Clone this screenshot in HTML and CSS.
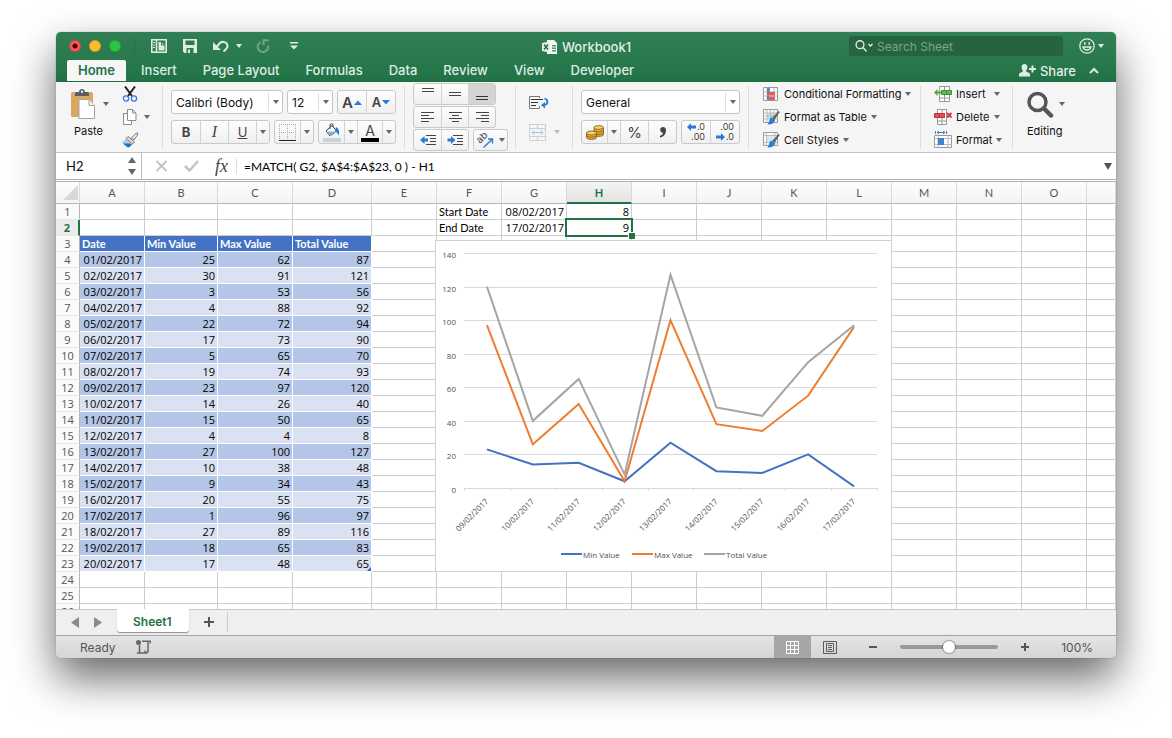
FILE: index.html
```
<!DOCTYPE html>
<html lang="en">
<head>
    <meta charset="UTF-8">
    <meta name="viewport" content="width=device-width, initial-scale=1.0">
    <title>Workbook1</title>
    <link rel="stylesheet" href="styles.css">
</head>
<body>
    <div class="window">
        <header class="top">
            <div class="titlebar">
                <div class="title-left">
                    <button class="light red" aria-label="Close"></button>
                    <button class="light yellow" aria-label="Minimize"></button>
                    <button class="light green" aria-label="Full screen"></button>
                    <span class="title-sep"></span>
                    <button class="plain tool" aria-label="Gallery">
                        <svg width="16" height="14" viewBox="0 0 16 14" fill="none" stroke="#dfece4" stroke-width="1.6"><path d="M.8.8h14.4v12.4H.8zM5.5.8v12.4"/><path d="M2 3.5h2M2 6h2M2 8.500h2" stroke-width="1"/><path d="M7.500 3v8.500h6V6L10.500 3z" fill="#dfece4" stroke="none"/><path d="M10.500 2.500V6H14" stroke="#2b7b4e" stroke-width="1"/></svg>
                    </button>
                    <button class="plain tool" aria-label="Save">
                        <svg width="14" height="14" viewBox="0 0 14 14"><path d="M0 0h14v14H1.500L0 12.500z" fill="#dfece4"/><path d="M2.500 1.500h9v4.500h-9zM3.500 9h7v5h-7z" fill="#2b7b4e"/><path d="M5 10.500h2V14H5z" fill="#dfece4"/></svg>
                    </button>
                    <button class="plain tool undo" aria-label="Undo">
                        <svg width="16" height="14" viewBox="0 0 16 14" fill="none" stroke="#dfece4" stroke-width="2"><path d="M3 8.500 6.500 4.500C9 1.500 14.500 3 14.500 7c0 2-1.500 3.500-4 5.500"/><path d="M0 3v8h8z" fill="#dfece4" stroke="none"/></svg>
                        <span class="caret light-caret"></span>
                    </button>
                    <button class="plain tool" aria-label="Redo">
                        <svg width="14" height="14" viewBox="0 0 14 14" fill="none" stroke="#6fa486" stroke-width="2"><path d="M4.500 3.200A5.200 5.200 0 1 0 12 6.500"/><path d="M7.500 6V1.200H12.500" /></svg>
                    </button>
                    <button class="plain tool customize" aria-label="Customize toolbar">
                        <svg width="8" height="8" viewBox="0 0 8 8" fill="#dfece4"><path d="M0 0h8v1.500H0zM0 3.500h8L4 7.500z"/></svg>
                    </button>
                </div>
                <h1 class="title">
                    <svg width="15" height="14" viewBox="0 0 15 14"><path d="M5 0h7l3 3v11H5z" fill="#f4f4f4"/><path d="M10 5h4v1.500h-4zM10 7.500h4V9h-4zM10 10h4v1.500h-4z" fill="#4d9a6c"/><path d="M0 3l8-1.500v11L0 11z" fill="#e7f1eb"/><path d="M2 4.500l4 5M6 4.500l-4 5" stroke="#217346" stroke-width="1.500"/></svg>
                    Workbook1
                </h1>
                <div class="title-right">
                    <label class="search">
                        <svg width="19" height="12" viewBox="0 0 19 12" fill="none" stroke="#dfece4" stroke-width="1.400"><circle cx="5" cy="4.700" r="3.900"/><path d="M8 7.500l3.500 4M13.500 4l2 2 2-2"/></svg>
                        <input type="text" placeholder="Search Sheet" aria-label="Search Sheet">
                    </label>
                    <button class="plain smile" aria-label="Feedback">
                        <svg width="16" height="16" viewBox="0 0 16 16" fill="none" stroke="#dfece4" stroke-width="1.300"><circle cx="8" cy="8" r="7.200"/><path d="M4 9c1 4 7 4 8 0z"/><path d="M5.800 4.300v2.400M10.200 4.300v2.400" stroke-width="1.600"/></svg>
                        <span class="caret light-caret"></span>
                    </button>
                </div>
            </div>
            <nav class="tabs">
                <a href="#" class="tab active">Home</a>
                <a href="#" class="tab">Insert</a>
                <a href="#" class="tab">Page Layout</a>
                <a href="#" class="tab">Formulas</a>
                <a href="#" class="tab">Data</a>
                <a href="#" class="tab">Review</a>
                <a href="#" class="tab">View</a>
                <a href="#" class="tab">Developer</a>
                <button class="plain share">
                    <svg width="17" height="13" viewBox="0 0 17 13" fill="#dfece4"><path d="M5.500 0C7.500 0 8.500 1.400 8.400 3.400 8.300 5 7.500 6 7.200 6.500v1L11 9.500V12.500H0v-3l3.800-2v-1C3.500 6 2.700 5 2.600 3.400 2.500 1.400 3.500 0 5.500 0z"/><path d="M12.500 1.500h2v2.500H17v2h-2.500v2.500h-2V6H10V4h2.500z"/></svg>
                    Share
                </button>
                <button class="plain collapse" aria-label="Collapse ribbon">
                    <svg width="10" height="7" viewBox="0 0 10 7" fill="none" stroke="#dfece4" stroke-width="2"><path d="M1 6l4-4 4 4"/></svg>
                </button>
            </nav>
        </header>

        <section class="ribbon">
            <div class="group clipboard">
                <button class="plain big paste">
                    <span class="big-icon">
                        <svg width="24" height="30" viewBox="0 0 24 30"><rect x="0" y="3" width="22" height="25" rx="1.500" fill="#dba85f"/><path d="M4 7V4.500Q4 3 6 3h2c0-4 6-4 6 0h2q2 0 2 1.500V7z" fill="#5a5d63"/><circle cx="11" cy="2.800" r="1.200" fill="#e8e8e8"/><path d="M8 10.500h10l5.500 6v13H8z" fill="#fff" stroke="#a5a5a5"/><path d="M18 10.500v6h5.500" fill="#f0f0f0" stroke="#a5a5a5"/></svg>
                        <span class="caret"></span>
                    </span>
                    <span class="big-label">Paste</span>
                </button>
                <div class="stack">
                    <button class="plain" aria-label="Cut">
                        <svg width="16" height="16" viewBox="0 0 16 16" fill="none"><path d="M3 .5l7 9.500M13 .5L6 10" stroke="#222" stroke-width="2"/><circle cx="4" cy="12.500" r="2.600" stroke="#2f7fd0" stroke-width="1.300"/><circle cx="12" cy="12.500" r="2.600" stroke="#2f7fd0" stroke-width="1.300"/></svg>
                    </button>
                    <button class="plain" aria-label="Copy">
                        <svg width="16" height="16" viewBox="0 0 16 16" fill="#fff" stroke="#8d8d8d"><path d="M1.500 4.500h8v11h-8z"/><path d="M5.500.5h5l3.500 3.500v7.500H5.500z"/><path d="M10.500.5V4H14" fill="none"/></svg>
                        <span class="caret"></span>
                    </button>
                    <button class="plain" aria-label="Format painter">
                        <svg width="17" height="16" viewBox="0 0 17 16"><path d="M9.500 6L14 1.200q1.500-.8 2 .8L12 8z" fill="#ededed" stroke="#777"/><path d="M6 4.500l6.500 5.500-2 2L4 6.500z" fill="#ddd" stroke="#777"/><path d="M3.800 7L10 12c-1.500 2.500-3 3.500-4.500 3.500L.5 11.500C0 9.500 2 9 3.800 7z" fill="#a8c9ee"/><path d="M1 11.500l5 4c2-.5 3-1.500 4-3.500l-3-.5z" fill="#2470bd"/></svg>
                    </button>
                </div>
            </div>
            <span class="divider"></span>

            <div class="group rows font-group">
                <div class="line">
                    <span class="combo combo-font"><select aria-label="Font"><option>Calibri (Body)</option></select><i><span class="caret"></span></i></span>
                    <span class="combo combo-size"><select aria-label="Font size"><option>12</option></select><i><span class="caret"></span></i></span>
                    <span class="seg wide">
                        <button aria-label="Increase font size"><b class="letter">A</b><svg width="8" height="5" viewBox="0 0 8 5"><path d="M0 5l4-4.500L8 5z" fill="#2b7cd3"/></svg></button>
                        <button aria-label="Decrease font size"><b class="letter small">A</b><svg width="8" height="5" viewBox="0 0 8 5"><path d="M0 0h8L4 4.500z" fill="#2b7cd3"/></svg></button>
                    </span>
                </div>
                <div class="line">
                    <span class="seg">
                        <button class="w28"><b>B</b></button>
                        <button class="w28 italic"><i>I</i></button>
                        <button class="w28"><u>U</u></button>
                        <button class="more" aria-label="Underline styles"><span class="caret"></span></button>
                    </span>
                    <span class="seg">
                        <button class="w25" aria-label="Borders"><svg width="17" height="17" viewBox="0 0 17 17" fill="none"><path d="M.5 0v16M8.500 0v16M16.500 0v16M0 .5h17M0 8.500h17" stroke="#aaa" stroke-dasharray="1 1"/><path d="M0 16.500h17" stroke="#222"/></svg></button>
                        <button class="more" aria-label="Border styles"><span class="caret"></span></button>
                    </span>
                    <span class="seg">
                        <button class="w25" aria-label="Fill color"><svg width="18" height="19" viewBox="0 0 18 19"><path d="M3 8l6-5.500 4.500 5.500-6.500 5z" fill="#fff" stroke="#444"/><path d="M3.500 8.500h9.500l-6 4.500z" fill="#7fb3e8"/><path d="M7 6V1.500Q8.500 0 10 1.500V4" fill="none" stroke="#444"/><path d="M13 4c3 1.500 4 5 2.500 8.500C14.500 10 13.500 9 12 8z" fill="#2b7cd3"/><path d="M0 15h18v4H0z" fill="#c9d3de"/></svg></button>
                        <button class="more" aria-label="Fill colors"><span class="caret"></span></button>
                        <button class="w25 color-a" aria-label="Font color"><span>A</span></button>
                        <button class="more" aria-label="Font colors"><span class="caret"></span></button>
                    </span>
                </div>
            </div>
            <span class="divider"></span>

            <div class="group align-group">
                <span class="seg short">
                    <button class="w27" aria-label="Align top"><svg width="12" height="16" viewBox="0 0 12 16" stroke="#444"><path d="M0 2.500h12M0 5.500h12"/></svg></button>
                    <button class="w27" aria-label="Align middle"><svg width="12" height="16" viewBox="0 0 12 16" stroke="#444"><path d="M0 6.500h12M0 9.500h12"/></svg></button>
                    <button class="w27 pressed" aria-label="Align bottom"><svg width="12" height="16" viewBox="0 0 12 16" stroke="#333"><path d="M0 10.500h12M0 13.500h12"/></svg></button>
                </span>
                <span class="seg short">
                    <button class="w27" aria-label="Align left"><svg width="13" height="10" viewBox="0 0 13 10" stroke="#444"><path d="M0 .5h13M0 3.500h8M0 6.500h13M0 9.500h8"/></svg></button>
                    <button class="w27" aria-label="Center"><svg width="13" height="10" viewBox="0 0 13 10" stroke="#444"><path d="M0 .5h13M3 3.500h7M0 6.500h13M3 9.500h7"/></svg></button>
                    <button class="w27" aria-label="Align right"><svg width="13" height="10" viewBox="0 0 13 10" stroke="#444"><path d="M0 .5h13M5 3.500h8M0 6.500h13M5 9.500h8"/></svg></button>
                </span>
                <div class="line">
                    <span class="seg short">
                        <button class="w27" aria-label="Decrease indent"><svg width="16" height="10" viewBox="0 0 16 10"><path d="M6 .5h10M10 3.500h6M10 6.500h6M6 9.500h10" stroke="#444"/><path d="M0 5l4.500-4v2.500H8v3H4.500V9z" fill="#2b7cd3"/></svg></button>
                        <button class="w27" aria-label="Increase indent"><svg width="16" height="10" viewBox="0 0 16 10"><path d="M6 .5h10M10 3.500h6M10 6.500h6M6 9.500h10" stroke="#444"/><path d="M8.500 5L4 1v2.500H.5v3H4V9z" fill="#2b7cd3"/></svg></button>
                    </span>
                    <span class="seg short">
                        <button class="orient" aria-label="Orientation"><svg width="18" height="18" viewBox="0 0 18 18"><text x="3" y="13" class="ab" transform="rotate(-45 3 13)">ab</text><path d="M6.500 16.500L15 8.500M11 8H15.500V12.500" fill="none" stroke="#2b7cd3" stroke-width="1.400"/></svg><span class="caret"></span></button>
                    </span>
                </div>
            </div>
            <span class="divider"></span>

            <div class="group rows wrap-group">
                <button class="plain" aria-label="Wrap text">
                    <svg width="20" height="13" viewBox="0 0 20 13" fill="none"><path d="M10.500 2V.5H.5v12h10V10" stroke="#777"/><path d="M2 3.500h12M2 9.500h5M2 6.500h7" stroke="#333"/><path d="M15.500 2.500c4 1 4 6-.5 6.500" stroke="#2b7cd3" stroke-width="1.800"/><path d="M12 9l4-3v6.500z" fill="#2b7cd3"/></svg>
                </button>
                <button class="plain" aria-label="Merge cells">
                    <svg width="17" height="17" viewBox="0 0 17 17" fill="none" stroke="#cfcfcf"><path d="M.5.5h16v16H.5zM.5 4.500h16M.5 12.500h16M8.500.5v4M8.500 12.500v4"/><path d="M3 8.500h11M5.500 6L3 8.500 5.500 11M11.500 6L14 8.500 11.500 11" stroke="#9fc3e8"/></svg>
                    <span class="caret dim"></span>
                </button>
            </div>
            <span class="divider"></span>

            <div class="group rows number-group">
                <span class="combo"><select aria-label="Number format"><option>General</option></select><i><span class="caret"></span></i></span>
                <div class="line">
                    <span class="seg">
                        <button class="w25" aria-label="Currency"><svg width="18" height="15" viewBox="0 0 18 15" stroke="#7b5316" stroke-width=".8" fill="#e5ae38"><path d="M8 2.500v7c0 2.500 9.500 2.500 9.500 0v-7z"/><path d="M8 5c0 2.500 9.500 2.500 9.500 0M8 7.500c0 2.500 9.500 2.500 9.500 0" fill="none"/><ellipse cx="12.700" cy="2.500" rx="4.700" ry="1.900" fill="#f7d271"/><path d="M.5 8v4.500c0 2.500 10 2.500 10 0V8z"/><path d="M.5 10.300c0 2.500 10 2.500 10 0" fill="none"/><ellipse cx="5.500" cy="8" rx="5" ry="2" fill="#f7d271"/></svg></button>
                        <button class="more" aria-label="Currency formats"><span class="caret"></span></button>
                        <button class="w28 percent">%</button>
                        <button class="w28" aria-label="Comma style"><svg width="8" height="12" viewBox="0 0 8 12"><path d="M1.200 3.500C1.200 0 7.300 0 7 4.500 6.800 8.500 4.500 11 1 11.500V9.800c2-.4 3-1.800 3-3C2.500 7 1.200 5.500 1.200 3.500z" fill="#444"/></svg></button>
                    </span>
                    <span class="seg wide">
                        <button class="decimals" aria-label="Increase decimal"><span><svg width="9" height="8" viewBox="0 0 9 8"><path d="M0 4l4-4v2.500h5v3H4V8z" fill="#2b7cd3"/></svg>.0</span><span>.00</span></button>
                        <button class="decimals" aria-label="Decrease decimal"><span>.00</span><span><svg width="9" height="8" viewBox="0 0 9 8"><path d="M9 4L5 0v2.500H0v3h5V8z" fill="#2b7cd3"/></svg>.0</span></button>
                    </span>
                </div>
            </div>
            <span class="divider"></span>

            <div class="group stack styles-group">
                <button class="plain">
                    <svg width="17" height="14" viewBox="0 0 17 14"><path d="M.5.5h14v13H.5z" fill="#fff" stroke="#999"/><path d="M.5 5h14M.5 9h14M4 .5v13M11 .5v13" stroke="#bbb"/><path d="M4 1h3v4H4z" fill="#4a90d9"/><path d="M4 5h8v3.500H4z" fill="#e25a5a"/><path d="M4 8.500h2V13H4z" fill="#4a90d9"/><path d="M6 9.500h6V13H6z" fill="#e25a5a"/></svg>
                    Conditional Formatting<span class="caret"></span>
                </button>
                <button class="plain">
                    <svg width="17" height="16" viewBox="0 0 17 16"><path d="M.5.5h14v13H.5z" fill="#fff" stroke="#999"/><path d="M4 4h7v6H4z" fill="#c5dcf4"/><path d="M.5 4h14M.5 7h14M.5 10h14M4 .5v13M7.500.5v13M11 .5v13" stroke="#bbb"/><path d="M9 9l6-6.500q1.500-.8 1.500.8L11.500 11z" fill="#666"/><path d="M8.500 8.500l3.500 3c-1 3-4 4.500-7.500 4 1.500-1 1-5 4-7z" fill="#2b7cd3"/></svg>
                    Format as Table<span class="caret"></span>
                </button>
                <button class="plain">
                    <svg width="17" height="16" viewBox="0 0 17 16"><path d="M.5.5h14v13H.5z" fill="#fff" stroke="#999"/><path d="M4 4h7v6H4z" fill="#d5e6f7"/><path d="M.5 3.500h14M.5 10.500h14M3.500.5v13M12 .5v13" stroke="#bbb"/><path d="M9 9l6-6.500q1.500-.8 1.500.8L11.500 11z" fill="#666"/><path d="M8.500 8.500l3.500 3c-1 3-4 4.500-7.500 4 1.500-1 1-5 4-7z" fill="#2b7cd3"/></svg>
                    Cell Styles<span class="caret"></span>
                </button>
            </div>
            <span class="divider"></span>

            <div class="group stack cells-group">
                <button class="plain">
                    <svg width="18" height="16" viewBox="0 0 18 16"><path d="M5.500.5h10v15h-10zM10.500.5v15M5.500 12h10" fill="#fff" stroke="#999"/><path d="M7.500 4.500h10v4h-10zM12.500 4.500v4" fill="#5fb851" stroke="#3d9432"/><path d="M0 6.500L3.500 3v2.500H7v2H3.500V10z" fill="#4ea93f"/></svg>
                    <span class="wide-label">Insert</span><span class="caret"></span>
                </button>
                <button class="plain">
                    <svg width="18" height="16" viewBox="0 0 18 16"><path d="M3.500.5h9v15h-9zM8 .5v15M3.500 12h9" fill="#fff" stroke="#999"/><path d="M.5 4.500h10v4H.5zM5.500 4.500v4" fill="#e05252" stroke="#c13232"/><path d="M13 4l4.500 4.500M17.500 4L13 8.500" stroke="#d03535" stroke-width="1.800"/></svg>
                    <span class="wide-label">Delete</span><span class="caret"></span>
                </button>
                <button class="plain">
                    <svg width="18" height="17" viewBox="0 0 18 17"><path d="M.5 4.500h17v12H.5z" fill="#fff" stroke="#999"/><path d="M.5 7.500h17M.5 13.500h17M4 4.500v12M14 4.500v12" stroke="#bbb"/><path d="M4 7h6v7H4z" fill="#3f82c9"/><path d="M1.500 0v3M12.500 0v3M3 1.500h8M5 0L3 1.500 5 3M9 0l2 1.500L9 3" fill="none" stroke="#3f82c9"/></svg>
                    <span class="wide-label">Format</span><span class="caret"></span>
                </button>
            </div>
            <span class="divider"></span>

            <div class="group editing">
                <button class="plain big">
                    <span class="big-icon">
                        <svg width="27" height="30" viewBox="0 0 27 30" fill="none" stroke="#55565b"><circle cx="10.500" cy="13" r="8.500" stroke-width="3.500"/><path d="M17 19.500l7 7" stroke-width="4.500" stroke-linecap="round"/></svg>
                        <span class="caret"></span>
                    </span>
                    <span class="big-label">Editing</span>
                </button>
            </div>
        </section>

        <section class="formula-bar">
            <label class="name-box"><input type="text" value="H2" aria-label="Name box">
                <svg width="8" height="18" viewBox="0 0 8 18" fill="#666"><path d="M0 6l4-6 4 6zM0 12h8l-4 6z"/></svg>
            </label>
            <button class="plain" aria-label="Cancel"><svg width="13" height="12" viewBox="0 0 13 12" stroke="#c4c4c4" stroke-width="2"><path d="M1.500 1l10 10M11.500 1l-10 10"/></svg></button>
            <button class="plain" aria-label="Enter"><svg width="15" height="12" viewBox="0 0 15 12" fill="none" stroke="#c4c4c4" stroke-width="2.500"><path d="M1 6l4.500 4.500L14 1"/></svg></button>
            <button class="plain fx">fx</button>
            <input class="formula" type="text" value="=MATCH( G2, $A$4:$A$23, 0 ) - H1" aria-label="Formula">
            <button class="plain expand" aria-label="Expand formula bar"><svg width="8" height="7" viewBox="0 0 8 7"><path d="M0 0h8L4 7z" fill="#555"/></svg></button>
        </section>

        <main class="sheet">
            <table class="grid">
                <colgroup>
                    <col class="c-head"><col class="c-a"><col class="c-b"><col class="c-c"><col class="c-d">
                    <col class="c-n" span="11"><col>
                </colgroup>
                <thead><tr id="columns"></tr></thead>
                <tbody id="rows"></tbody>
            </table>
            <svg class="chart" id="chart" viewBox="0 0 455 330" role="img" aria-label="Line chart"></svg>
        </main>

        <nav class="sheet-tabs">
            <button class="plain" aria-label="Previous sheet"><svg width="8" height="11" viewBox="0 0 8 11"><path d="M8 0v11L0 5.500z" fill="#8a8a8a"/></svg></button>
            <button class="plain" aria-label="Next sheet"><svg width="8" height="11" viewBox="0 0 8 11"><path d="M0 0v11l8-5.500z" fill="#8a8a8a"/></svg></button>
            <a href="#" class="sheet-tab">Sheet1</a>
            <button class="plain add" aria-label="Add sheet"><svg width="10" height="10" viewBox="0 0 10 10"><path d="M4 0h2v4h4v2H6v4H4V6H0V4h4z" fill="#555"/></svg></button>
        </nav>

        <footer class="status">
            <span class="ready">Ready</span>
            <svg width="15" height="14" viewBox="0 0 15 14" fill="none" stroke="#666" stroke-width="1.500"><circle cx="2.500" cy="2.500" r="2.500" fill="#666" stroke="none"/><path d="M6 1.200h8.500v2.300M12 1v9.500q0 2.500-2 2.500H1M3.500 5v8M9 10.500q0 2.500 2 2.500"/></svg>
            <button class="plain view active" aria-label="Normal view"><svg width="13" height="13" viewBox="0 0 13 13" fill="none" stroke="#fff"><path d="M.5.5h12v12H.5zM4.500.5v12M8.500.5v12M.5 4.500h12M.5 8.500h12"/></svg></button>
            <button class="plain view" aria-label="Page layout view"><svg width="14" height="13" viewBox="0 0 14 13" fill="none" stroke="#5d5d5d"><path d="M.5.5h13v12H.5zM3.500 2.500h7v8h-7zM5 4.500h4M5 6.500h4M5 8.500h4"/></svg></button>
            <button class="plain zoom-out" aria-label="Zoom out"><svg width="8" height="8" viewBox="0 0 8 8"><path d="M0 3h8v2H0z" fill="#555"/></svg></button>
            <input type="range" class="zoom" min="0" max="100" value="50" aria-label="Zoom">
            <button class="plain zoom-in" aria-label="Zoom in"><svg width="8" height="8" viewBox="0 0 8 8"><path d="M3 0h2v3h3v2H5v3H3V5H0V3h3z" fill="#555"/></svg></button>
            <span class="percent-label">100%</span>
        </footer>
    </div>

    <script src="script.js"></script>
</body>
</html>
```
FILE: styles.css
```
* {
    box-sizing: border-box;
}

body {
    margin: 0;
    padding: 32px 56px 80px;
    background: white;
    font-family: Inter, "Liberation Sans", sans-serif;
    font-size: 11px;
    color: #111;
    overflow: hidden;
}

.window {
    display: flex;
    flex-direction: column;
    height: calc(100vh - 112px);
    min-height: 400px;
    border-radius: 5px;
    overflow: hidden;
    background: white;
    box-shadow: 0 0 1px rgba(0, 0, 0, 0.6), 0 20px 44px rgba(0, 0, 0, 0.6);
}

button, input, select {
    font: inherit;
    color: inherit;
}

button {
    padding: 0;
    white-space: nowrap;
}

svg {
    display: block;
    flex: none;
}

a {
    text-decoration: none;
}

.plain {
    display: flex;
    align-items: center;
    border: none;
    background: none;
}

.caret {
    flex: none;
    width: 0;
    border: 3px solid transparent;
    border-top: 4px solid #666;
    border-bottom: none;
}

.caret.dim {
    border-top-color: #bbb;
}

.caret.light-caret {
    border-top-color: #dfece4;
}

/* title bar */
.top {
    background: linear-gradient(#318055, #217346);
    color: #e3efe8;
    border-bottom: 1px solid #1c6a3f;
}

.titlebar {
    display: flex;
    align-items: center;
    height: 28px;
}

.title-left, .title-right {
    display: flex;
    align-items: center;
    flex: 1;
}

.title-left {
    padding-left: 13px;
    gap: 8px;
}

.light {
    width: 12px;
    height: 12px;
    border-radius: 50%;
    border: 1px solid rgba(0, 0, 0, 0.15);
}

.red {
    background: radial-gradient(#4d0000 2px, #fc5753 3px);
}

.yellow {
    background: #fdbc2e;
}

.green {
    background: #28c840;
}

.title-sep {
    width: 1px;
    height: 16px;
    margin: 0 8px 0 5px;
    background: #276e49;
}

.tool {
    margin-right: 8px;
}

.undo {
    gap: 7px;
}

.undo + .tool {
    margin-left: -2px;
}

.customize {
    margin-left: 4px;
}

.title {
    display: flex;
    align-items: center;
    gap: 5px;
    margin: 0;
    padding-top: 2px;
    font-size: 13px;
    font-weight: 500;
}

.title-right {
    justify-content: flex-end;
    padding-right: 12px;
    gap: 16px;
}

.search {
    display: flex;
    align-items: center;
    gap: 3px;
    width: 214px;
    height: 20px;
    padding-left: 6px;
    border-radius: 3px;
    background: #25643f;
}

.search input {
    flex: 1;
    min-width: 0;
    border: none;
    background: none;
    font-size: 12px;
    padding: 0;
}

.search input::placeholder {
    color: #79a58a;
}

.smile {
    gap: 3px;
}

.tabs {
    display: flex;
    height: 21px;
    padding-left: 11px;
    padding-right: 17px;
    font-size: 13px;
    font-weight: 500;
}

.tab {
    padding: 0 13px;
    line-height: 20px;
    color: #dfece4;
}

.tab.active {
    padding: 0 11px;
    margin-right: 2px;
    background: #f6f6f6;
    color: #217346;
    font-weight: 600;
    border-radius: 2px 2px 0 0;
}

.share {
    margin-left: auto;
    gap: 4px;
    line-height: 20px;
}

.collapse {
    margin-left: 13px;
}

/* ribbon */
.ribbon {
    display: flex;
    height: 71px;
    flex: none;
    background: #f5f5f5;
    border-bottom: 1px solid #c4c4c4;
}

.divider {
    width: 1px;
    margin: 4px 8px;
    background: #dcdcdc;
}

.group, .line, .seg {
    display: flex;
    flex: none;
}

.line {
    gap: 4px;
}

.rows {
    flex-direction: column;
    gap: 6px;
    padding-top: 8px;
}

.stack {
    display: grid;
    grid-template-rows: 23px 23px 23px;
    align-content: start;
}

.clipboard {
    width: 98px;
    padding-left: 15px;
    gap: 11px;
}

.clipboard .stack .plain {
    gap: 6px;
}

.big {
    flex-direction: column;
    align-items: flex-start;
    width: 40px;
    padding-top: 7px;
    gap: 5px;
}

.big-icon {
    display: flex;
    align-items: center;
    gap: 8px;
}

.editing .big-icon {
    gap: 5px;
}

.big-label {
    line-height: 14px;
}

.paste .big-label {
    padding-left: 3px;
}

.combo {
    display: flex;
    height: 24px;
    border: 1px solid #c3c3c3;
    border-radius: 3px;
    background: white;
}

.combo select {
    flex: 1;
    min-width: 0;
    appearance: none;
    border: none;
    background: none;
    padding: 0 4px;
    font-size: 12px;
}

.combo i {
    display: flex;
    align-items: center;
    justify-content: center;
    width: 14px;
    margin: 2px 0;
    border-left: 1px solid #ddd;
}

.combo-font {
    width: 112px;
}

.combo-size {
    width: 46px;
}

.seg {
    height: 24px;
    border: 1px solid #c9c9c9;
    border-radius: 3px;
    background: linear-gradient(#fdfdfd, #f0f0f0);
    overflow: hidden;
}

.seg.short {
    height: 22px;
}

.seg.wide {
    width: 59px;
}

.seg button {
    display: flex;
    align-items: center;
    justify-content: center;
    border: none;
    border-left: 1px solid #d3d3d3;
    background: none;
    font-size: 13px;
    color: #444;
}

.seg button:first-child {
    border-left: none;
}

.seg .more {
    width: 13px;
}

.seg.wide button {
    flex: 1;
    gap: 1px;
}

.letter {
    font-size: 15px;
    font-weight: 600;
}

.letter.small {
    font-size: 13px;
}

.w25 { width: 25px; }
.w27 { width: 27px; }
.w28 { width: 28px; }

.font-group {
    width: 225px;
}

.font-group .line {
    justify-content: space-between;
}

.seg .italic {
    font-family: "Liberation Serif", serif;
    font-size: 16px;
}

.color-a span {
    width: 18px;
    line-height: 15px;
    border-bottom: 4px solid #000;
    font-size: 14px;
}

.align-group {
    flex-direction: column;
    gap: 1px;
    padding-top: 1px;
    width: 94px;
    align-items: flex-start;
}

.seg .pressed {
    background: #d4d4d4;
}

.align-group .line {
    gap: 4px;
}

.seg .orient {
    width: 33px;
    gap: 4px;
}

.ab {
    font-size: 10px;
    fill: #444;
}

.wrap-group {
    width: 40px;
    padding-left: 5px;
}

.wrap-group .plain {
    height: 24px;
    gap: 8px;
}

.number-group {
    width: 159px;
}

.number-group .line {
    justify-content: space-between;
}

.seg .percent {
    font-size: 15px;
}

.seg.wide .decimals {
    flex-direction: column;
    align-items: flex-end;
    padding-right: 5px;
    gap: 0;
    font-size: 9px;
    line-height: 10px;
}

.decimals span {
    display: flex;
    align-items: center;
    gap: 1px;
}

.styles-group {
    width: 155px;
    padding-left: 6px;
}

.styles-group .plain {
    gap: 4px;
}

.cells-group {
    width: 75px;
    padding-left: 5px;
}

.cells-group .plain {
    gap: 4px;
}

.wide-label {
    min-width: 34px;
    text-align: left;
}

.editing {
    padding-left: 6px;
}

/* formula bar */
.formula-bar {
    display: flex;
    flex: none;
    align-items: center;
    height: 29px;
    border-bottom: 3px double #b0b0b0;
    background: white;
    font-family: Lato, sans-serif;
    font-size: 13px;
}

.formula-bar input {
    border: none;
    background: none;
    padding: 0;
    min-width: 0;
}

.formula-bar > .plain {
    margin-right: 16px;
}

.name-box {
    display: flex;
    align-items: center;
    align-self: stretch;
    width: 86px;
    padding: 0 5px 0 10px;
    margin-right: 13px;
    border-right: 1px solid #bbb;
}

.name-box input {
    flex: 1;
}

.formula-bar > .fx {
    margin-right: 8px;
    font-family: "Liberation Serif", serif;
    font-style: italic;
    font-size: 18px;
    line-height: 18px;
    color: #444;
}

.formula-bar .formula {
    flex: 1;
    height: 16px;
    padding-left: 7px;
    border-left: 1px solid #ddd;
    font-size: 12px;
    color: #000;
}

.formula-bar > .expand {
    margin-right: 4px;
}

/* sheet */
.sheet {
    position: relative;
    flex: 1;
    min-height: 0;
    overflow: hidden;
    font-family: Lato, sans-serif;
}

.grid {
    width: 100%;
    table-layout: fixed;
    border-collapse: separate;
    border-spacing: 0;
    color: #000;
}

.c-head { width: 24px; }
.c-a { width: 65px; }
.c-b { width: 73px; }
.c-c { width: 75px; }
.c-d { width: 79px; }
.c-n { width: 65px; }

.grid th, .grid td {
    height: 16px;
    padding: 0 2px;
    border-right: 1px solid #cdcdcd;
    border-bottom: 1px solid #cdcdcd;
    line-height: 15px;
    white-space: nowrap;
}

.grid th {
    font-weight: 400;
    color: #555;
    background: #fafafa;
}

.grid thead th {
    height: 22px;
    border-right-color: #dadada;
    border-bottom-color: #b5b5b5;
    background: linear-gradient(#fdfdfd, #f4f4f4);
}

.grid tbody th {
    border-right-color: #b5b5b5;
    border-bottom-color: #e8e8e8;
}

.grid thead .corner {
    padding: 0 1px 0 0;
}

.corner svg {
    margin-left: auto;
}

.grid thead .current {
    border-bottom: 2px solid #217346;
    background: linear-gradient(#f4f4f4, #e2e2e2);
    color: #217346;
    font-weight: 700;
}

.grid tbody .current {
    border-right: 2px solid #217346;
    background: #ececec;
    color: #217346;
    font-weight: 700;
}

.num, .grid tbody th {
    font-family: "Open Sans", sans-serif;
}

.num {
    text-align: right;
}

.grid .head, .grid .dark, .grid .pale {
    border-color: white;
}

.grid .head {
    background: #4472c4;
    color: white;
    font-weight: 700;
    text-align: left;
}

.grid .dark {
    background: #b4c6e7;
}

.grid .pale {
    background: #d9e1f2;
}

.grid .last {
    position: relative;
}

.last::after {
    content: "";
    position: absolute;
    right: 0;
    bottom: 0;
    border: 2px solid #3f5fb5;
    border-top-color: transparent;
    border-left-color: transparent;
}

.grid .selected {
    position: relative;
}

.selected::before {
    content: "";
    position: absolute;
    inset: -2px;
    border: 2px solid #217346;
}

.selected::after {
    content: "";
    position: absolute;
    right: -4px;
    bottom: -4px;
    width: 6px;
    height: 6px;
    border: 1px solid white;
    border-right: none;
    border-bottom: none;
    background: #217346;
}

.chart {
    position: absolute;
    left: 379px;
    top: 58px;
    width: 457px;
    height: 332px;
    background: white;
    border: 1px solid #d0d0d0;
    font-family: "Open Sans", sans-serif;
}

.chart text {
    font-size: 8px;
    fill: #505050;
}

.chart .rule {
    stroke: #d9d9d9;
}

.chart .series {
    fill: none;
    stroke-width: 2;
}

/* sheet tabs and status bar */
.sheet-tabs {
    display: flex;
    flex: none;
    height: 26px;
    padding-left: 15px;
    border-top: 1px solid #c8c8c8;
    background: #efefef;
}

.sheet-tabs .plain {
    margin-right: 15px;
}

.sheet-tab {
    height: 23px;
    margin-top: -1px;
    padding: 0 17px 0 16px;
    border-radius: 0 0 3px 3px;
    background: white;
    box-shadow: 0 1px 1px rgba(0, 0, 0, 0.4);
    color: #217346;
    font-size: 12px;
    font-weight: 600;
    line-height: 25px;
}

.sheet-tabs .add {
    height: 20px;
    margin: 2px 0 0;
    padding: 0 13px 0 15px;
    border-right: 1px solid #ccc;
}

.status {
    display: flex;
    flex: none;
    align-items: center;
    height: 23px;
    padding: 0 23px 0 24px;
    border-top: 1px solid #a3a3a3;
    background: linear-gradient(#e4e4e4, #d5d5d5);
    color: #555;
    font-size: 12px;
}

.ready {
    margin-right: 20px;
}

.view {
    justify-content: center;
    align-self: stretch;
    width: 37px;
}

.view.active {
    margin-left: auto;
    background: #a6a6a6;
}

.zoom-out {
    margin-left: 21px;
}

.zoom {
    appearance: none;
    width: 98px;
    height: 12px;
    margin: 0 23px;
    background: none;
}

.zoom::-webkit-slider-runnable-track {
    height: 4px;
    border-radius: 2px;
    background: #999;
}

.zoom::-webkit-slider-thumb {
    appearance: none;
    width: 12px;
    height: 12px;
    margin-top: -4px;
    border-radius: 50%;
    background: white;
    box-shadow: 0 0 1px 1px rgba(0, 0, 0, 0.3);
}

.percent-label {
    margin-left: 32px;
}
```
FILE: script.js
```
const columns = "ABCDEFGHIJKLMNO".split("");

// min and max for each day of February 2017
const days = [
    [25, 62], [30, 91], [3, 53], [4, 88], [22, 72], [17, 73], [5, 65], [19, 74], [23, 97], [14, 26],
    [15, 50], [4, 4], [27, 100], [10, 38], [9, 34], [20, 55], [1, 96], [27, 89], [18, 65], [17, 48]
].map(([min, max], i) => ({
    date: String(i + 1).padStart(2, "0") + "/02/2017",
    min: min,
    max: max,
    total: min + max
}));

const cells = {
    A3: "Date", B3: "Min Value", C3: "Max Value", D3: "Total Value",
    F1: "Start Date", G1: "08/02/2017", H1: 8,
    F2: "End Date", G2: "17/02/2017", H2: 9
};

days.forEach((day, i) => {
    const row = i + 4;
    cells["A" + row] = day.date;
    cells["B" + row] = day.min;
    cells["C" + row] = day.max;
    cells["D" + row] = day.total;
});

function cellClass(col, row, value) {
    const names = [];
    if ("ABCD".includes(col) && row === 3) names.push("head");
    if ("ABCD".includes(col) && row > 3 && row < 24) names.push(row % 2 ? "pale" : "dark");
    if (/^\d/.test(value)) names.push("num");
    if (col + row === "H2") names.push("selected");
    if (col + row === "D23") names.push("last");
    return names.join(" ");
}

function drawGrid() {
    let head = `<th class="corner"><svg width="15" height="15" viewBox="0 0 15 15"><path d="M15 0v15H0z" fill="#d8d8d8"/></svg></th>`;
    columns.forEach(col => {
        head += `<th scope="col" class="${col === "H" ? "current" : ""}">${col}</th>`;
    });
    document.getElementById("columns").innerHTML = head + "<th></th>";

    let body = "";
    for (let row = 1; row <= 26; row++) {
        body += `<tr><th scope="row" class="${row === 2 ? "current" : ""}">${row}</th>`;
        columns.forEach(col => {
            const value = cells[col + row] ?? "";
            body += `<td class="${cellClass(col, row, value)}">${value}</td>`;
        });
        body += "<td></td></tr>";
    }
    document.getElementById("rows").innerHTML = body;
}

function drawChart() {
    const left = 28, right = 441, top = 12, bottom = 247;
    const shown = days.slice(8, 17);
    const step = (right - left) / shown.length;
    const x = i => left + step * (i + 0.5);
    const y = v => bottom - (bottom - top) * v / 140;
    let out = "";

    for (let v = 0; v <= 140; v += 20) {
        const lineY = Math.round(y(v)) + 0.5;
        out += `<path class="rule" d="M${left} ${lineY}H${right}"/>`;
        out += `<text x="20" y="${lineY + 4}" text-anchor="end">${v}</text>`;
    }
    for (let i = 0; i <= shown.length; i++) {
        out += `<path class="rule" d="M${Math.round(left + step * i) + 0.5} ${bottom}v3"/>`;
    }
    shown.forEach((day, i) => {
        out += `<text text-anchor="end" transform="translate(${x(i) + 2} 261) rotate(-45)">${day.date}</text>`;
    });

    const series = [
        { key: "min", name: "Min Value", color: "#4472c4", at: 125 },
        { key: "max", name: "Max Value", color: "#ed7d31", at: 196 },
        { key: "total", name: "Total Value", color: "#a5a5a5", at: 268 }
    ];
    series.forEach(s => {
        const points = shown.map((day, i) => `${x(i)},${y(day[s.key])}`).join(" ");
        out += `<polyline class="series" stroke="${s.color}" points="${points}"/>`;
        out += `<path class="series" stroke="${s.color}" d="M${s.at} 313h21"/>`;
        out += `<text x="${s.at + 22}" y="317">${s.name}</text>`;
    });
    document.getElementById("chart").innerHTML = out;
}

drawGrid();
drawChart();
```
